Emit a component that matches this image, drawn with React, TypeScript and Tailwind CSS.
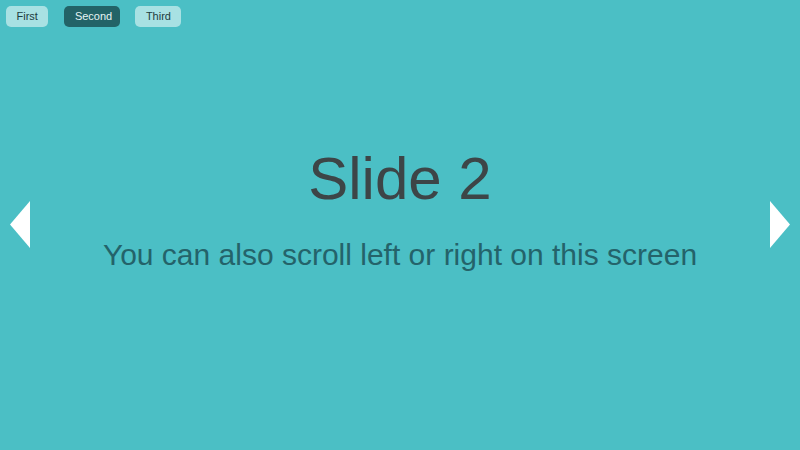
import React, { useState } from 'react';

const slides = [
  { title: 'Slide 1', text: 'Swipe or use the arrows to move between slides' },
  { title: 'Slide 2', text: 'You can also scroll left or right on this screen' },
  { title: 'Slide 3', text: 'This is the last slide' },
];

const tabs = ['First', 'Second', 'Third'];

export default function App() {
  const [active, setActive] = useState(1);
  const slide = slides[active];

  return (
    <div className="relative w-[800px] h-[450px] bg-[#4bbfc5] overflow-hidden font-['Liberation_Sans',Arial,sans-serif]">
      {/* Tabs */}
      <div className="absolute top-[6px] left-[6px] flex gap-[15px]">
        {tabs.map((t, i) => (
          <button
            key={t}
            onClick={() => setActive(i)}
            className={`h-[21px] px-[10.5px] rounded-[5px] text-[11px] leading-none ${
              i === active ? 'bg-[#236367] text-[#e6f4f4] w-[56px] ml-[1px]' : 'bg-[#a8e1e3] text-[#1d3c3e]'
            }`}
          >
            {t}
          </button>
        ))}
      </div>

      {/* Content */}
      <div className="flex flex-col items-center justify-center h-full pb-[31px]">
        <h1 className="text-[60px] leading-none text-[#3d4547]">{slide.title}</h1>
        <p className="text-[30px] leading-none text-[#24636a] mt-[31px]">{slide.text}</p>
      </div>

      {/* Arrows */}
      <button
        onClick={() => setActive((active + slides.length - 1) % slides.length)}
        className="absolute left-[10px] top-[201px]"
      >
        <svg width="20" height="47" viewBox="0 0 20 47">
          <polygon points="20,0 20,47 0,23.5" fill="#ffffff" />
        </svg>
      </button>
      <button
        onClick={() => setActive((active + 1) % slides.length)}
        className="absolute left-[770px] top-[201px]"
      >
        <svg width="20" height="47" viewBox="0 0 20 47">
          <polygon points="0,0 0,47 20,23.5" fill="#ffffff" />
        </svg>
      </button>
    </div>
  );
}
